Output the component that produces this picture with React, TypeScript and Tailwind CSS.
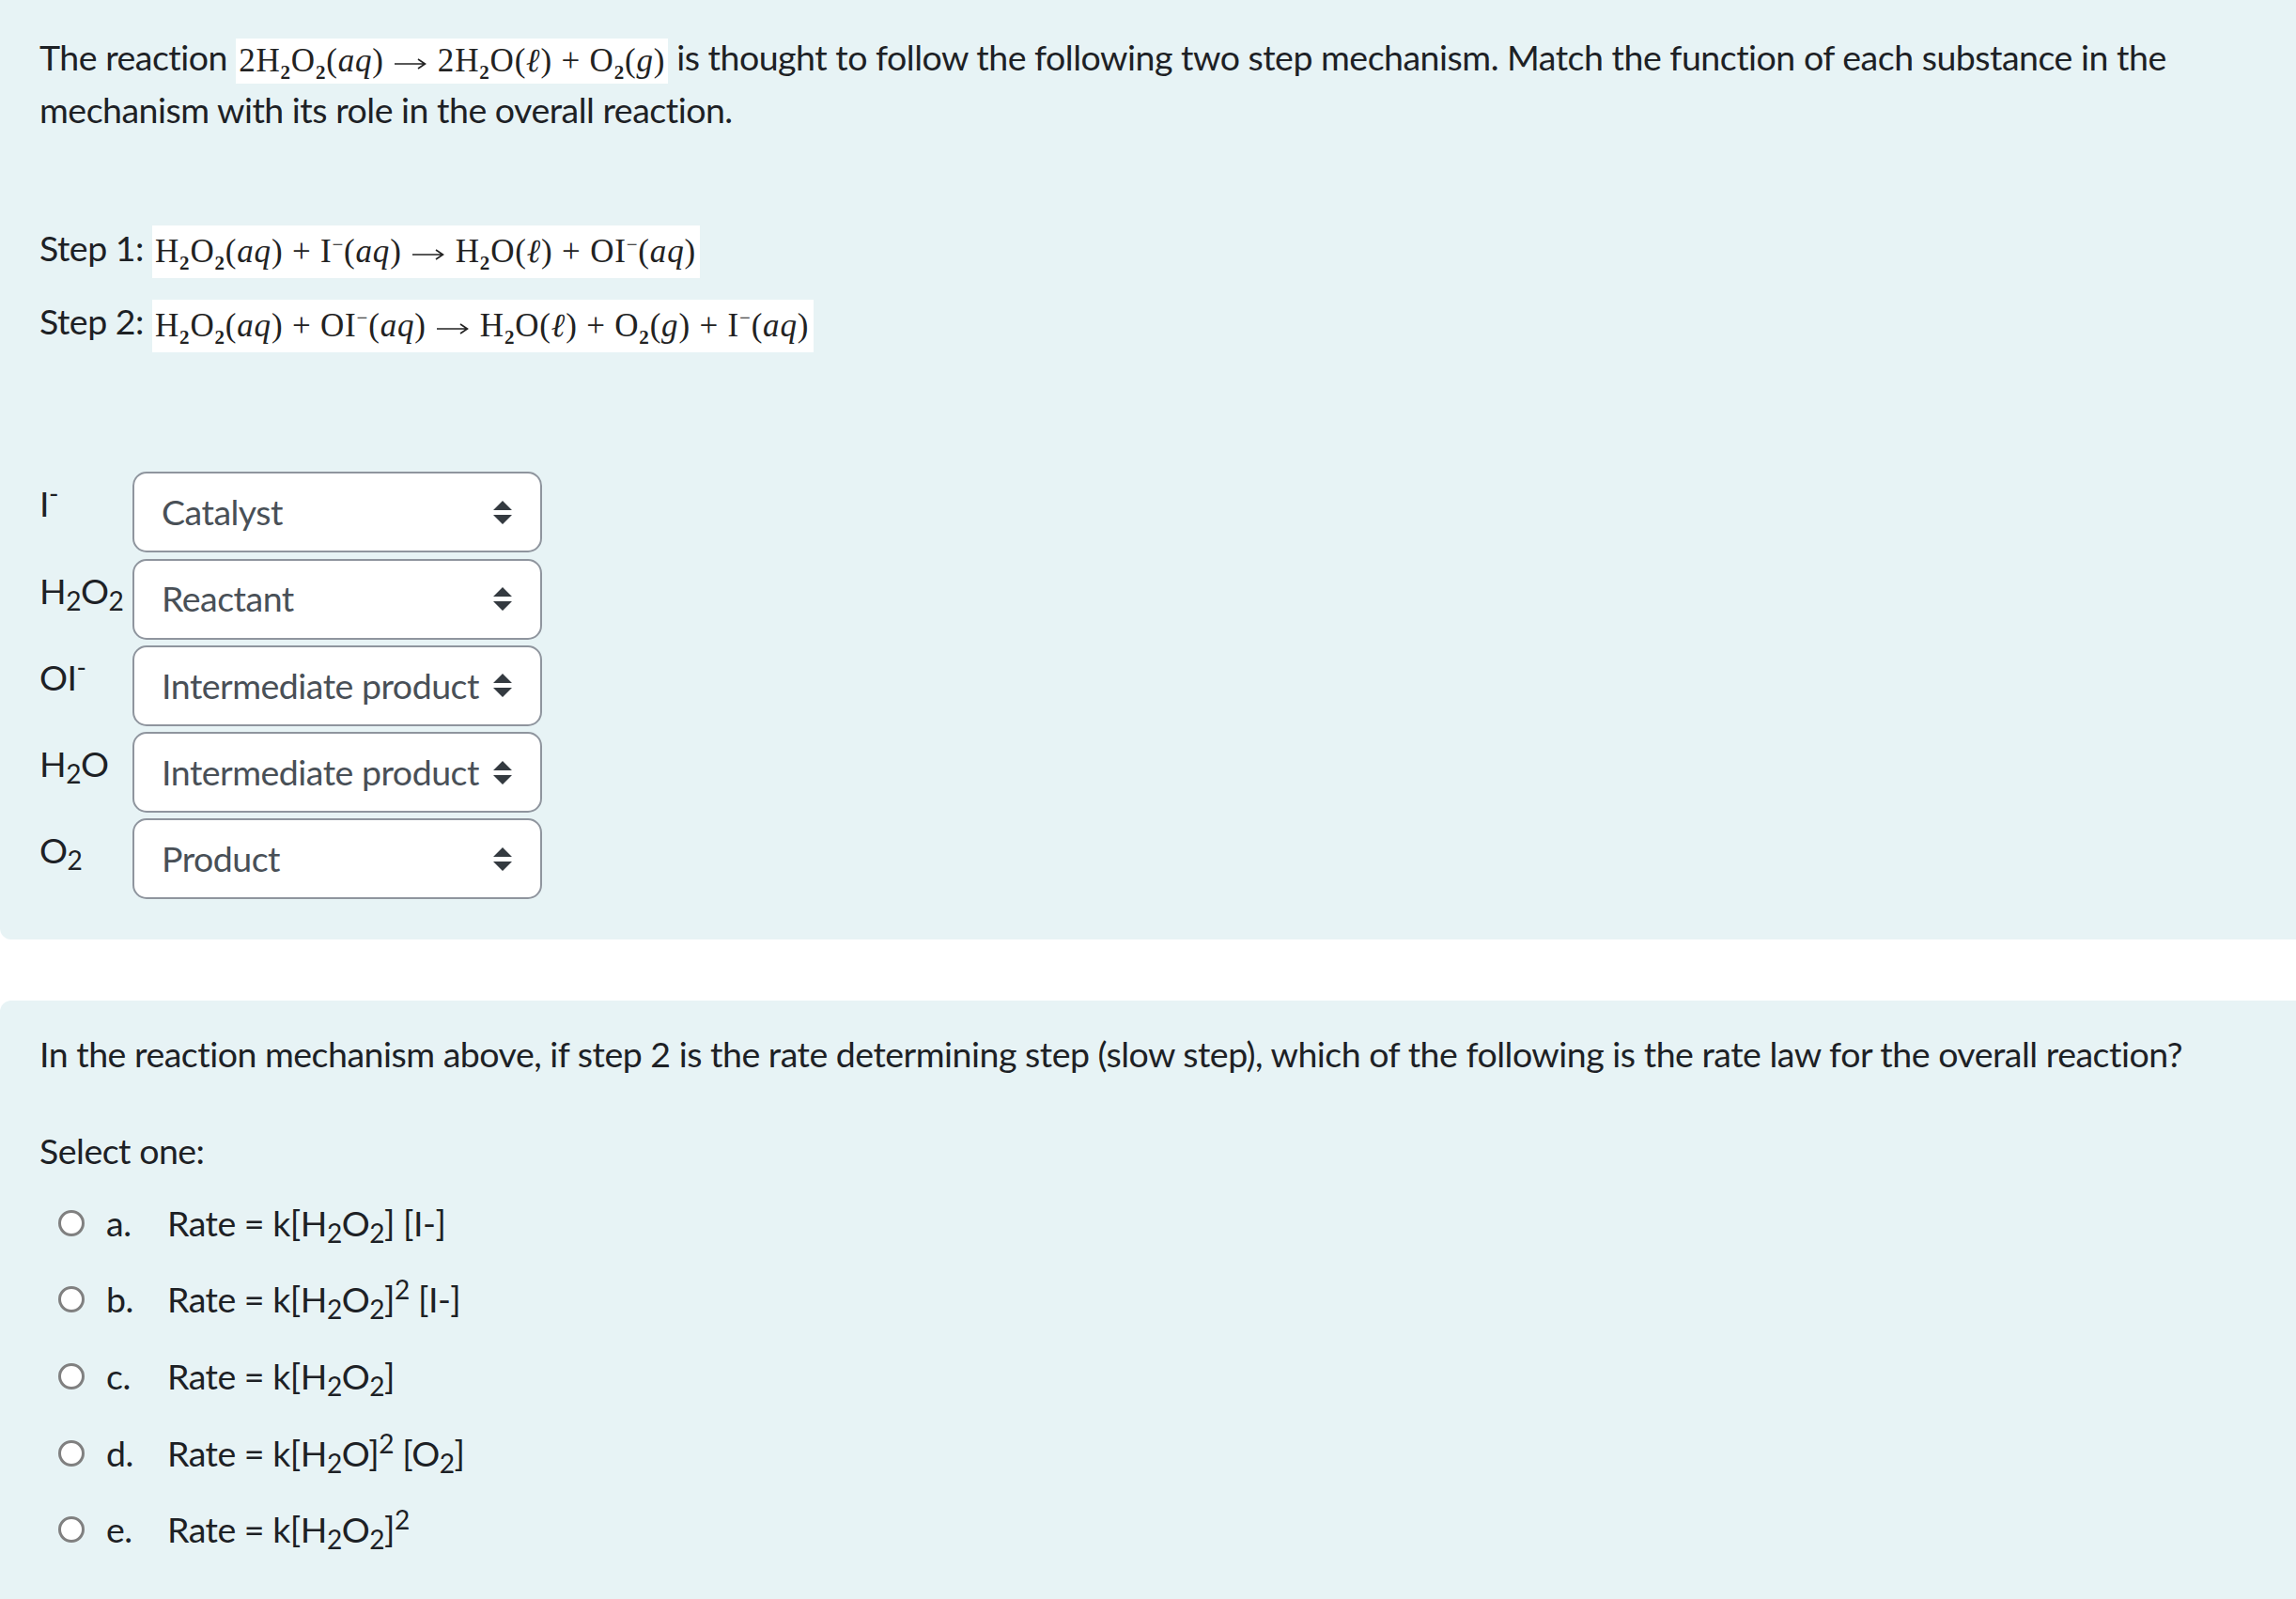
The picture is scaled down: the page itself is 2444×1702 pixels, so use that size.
import React from "react";

function S({ children }: { children: React.ReactNode }) {
  return <sub className="text-[0.6em] bottom-[-0.38em] font-bold">{children}</sub>;
}
function Sp({ children }: { children: React.ReactNode }) {
  return <sup className="text-[0.6em] top-[-0.6em]">{children}</sup>;
}
function I({ children }: { children: React.ReactNode }) {
  return <i className="italic">{children}</i>;
}
function Arr() {
  return (
    <svg width="34" height="14" viewBox="0 0 34 14" className="inline-block align-middle mx-[2px]">
      <path d="M0 7H32M25 2L32.5 7L25 12" stroke="#222" strokeWidth="1.6" fill="none" />
    </svg>
  );
}

function Arrows() {
  return (
    <svg width="20" height="25" viewBox="0 0 4 5" className="shrink-0">
      <path d="M2 0L0 2h4zm0 5L0 3h4z" fill="#343a40" />
    </svg>
  );
}

function Select({ value }: { value: string }) {
  return (
    <div className="w-[436px] h-[86px] bg-white border-2 border-[#8f959e] rounded-[15px] flex items-center justify-between pl-[29px] pr-[30px] text-[#495057]">
      <span>{value}</span>
      <Arrows />
    </div>
  );
}

function Radio() {
  return <div className="mt-[14px] ml-[20px] w-[28px] h-[28px] rounded-full border-[3px] border-[#808080] bg-white shrink-0" />;
}

const rows: { label: React.ReactNode; value: string }[] = [
  { label: <>I<sup>-</sup></>, value: "Catalyst" },
  { label: <>H<sub>2</sub>O<sub>2</sub></>, value: "Reactant" },
  { label: <>OI<sup>-</sup></>, value: "Intermediate product" },
  { label: <>H<sub>2</sub>O</>, value: "Intermediate product" },
  { label: <>O<sub>2</sub></>, value: "Product" },
];

const options: { n: string; t: React.ReactNode }[] = [
  { n: "a.", t: <>Rate = k[H<sub>2</sub>O<sub>2</sub>] [I-]</> },
  { n: "b.", t: <>Rate = k[H<sub>2</sub>O<sub>2</sub>]<sup>2</sup> [I-]</> },
  { n: "c.", t: <>Rate = k[H<sub>2</sub>O<sub>2</sub>]</> },
  { n: "d.", t: <>Rate = k[H<sub>2</sub>O]<sup>2</sup> [O<sub>2</sub>]</> },
  { n: "e.", t: <>Rate = k[H<sub>2</sub>O<sub>2</sub>]<sup>2</sup></> },
];

const eqBox = "inline-block align-middle bg-white font-['Liberation_Serif',serif] text-[35px] tracking-[0.8px] text-[#222] whitespace-nowrap";

export default function App() {
  return (
    <div className="w-full min-h-[1702px] bg-white font-['Lato',sans-serif] text-[37.5px] leading-[56.25px] tracking-[-0.5px] text-[#1d2125] overflow-hidden">
      <div className="h-[1000px] bg-[#e7f3f5] rounded-bl-[12px] pl-[42px] pt-[32.5px]">
        <p>
          The reaction{" "}
          <span className={eqBox + " h-[48px] leading-[48px] w-[460px] pl-[3px]"}>
            2H<S>2</S>O<S>2</S>(<I>aq</I>) <Arr /> 2H<S>2</S>O(<I>ℓ</I>) + O<S>2</S>(<I>g</I>)
          </span>{" "}
          is thought to follow the following two step mechanism. Match the function of each substance in the
          <br />
          mechanism with its role in the overall reaction.
        </p>
        <p className="mt-[90.5px]">
          Step 1:{" "}
          <span className={eqBox + " h-[56px] leading-[56px] w-[583px] pl-[3px]"}>
            H<S>2</S>O<S>2</S>(<I>aq</I>) + I<Sp>−</Sp>(<I>aq</I>) <Arr /> H<S>2</S>O(<I>ℓ</I>) + OI<Sp>−</Sp>(<I>aq</I>)
          </span>
        </p>
        <p className="mt-[18px]">
          Step 2:{" "}
          <span className={eqBox + " h-[56px] leading-[56px] w-[704px] pl-[3px]"}>
            H<S>2</S>O<S>2</S>(<I>aq</I>) + OI<Sp>−</Sp>(<I>aq</I>) <Arr /> H<S>2</S>O(<I>ℓ</I>) + O<S>2</S>(<I>g</I>) + I<Sp>−</Sp>(<I>aq</I>)
          </span>
        </p>
        <div className="mt-[127.5px] flex flex-col gap-[6.3px]">
          {rows.map((r, i) => (
            <div key={i} className="flex items-start h-[86px]">
              <div className="w-[99px] pt-[6px]">{r.label}</div>
              <Select value={r.value} />
            </div>
          ))}
        </div>
      </div>

      <div className="mt-[65px] bg-[#e7f3f5] rounded-tl-[12px] h-[637px] pl-[42px] pt-[29px]">
        <p>
          In the reaction mechanism above, if step 2 is the rate determining step (slow step), which of the following is the rate law for the overall reaction?
        </p>
        <p className="mt-[47px]">Select one:</p>
        <div className="mt-[20px] flex flex-col">
          {options.map((o) => (
            <div key={o.n} className="flex items-start h-[81.7px]">
              <Radio />
              <span className="ml-[23px] w-[65px]">{o.n}</span>
              <span>{o.t}</span>
            </div>
          ))}
        </div>
      </div>
    </div>
  );
}
